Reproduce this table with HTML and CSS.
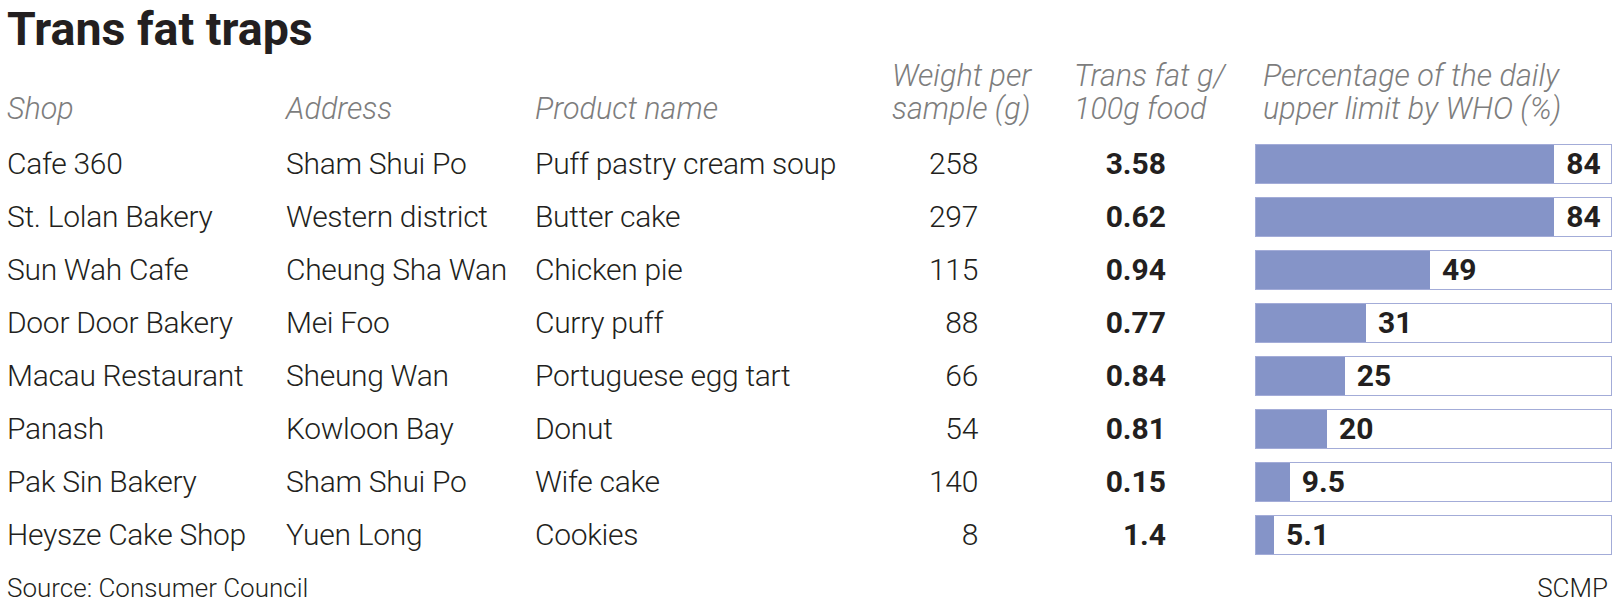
FILE: index.html
```html
<!DOCTYPE html>
<html lang="en">
<head>
<meta charset="utf-8">
<title>Trans fat traps</title>
<link rel="stylesheet" href="styles.css">
</head>
<body>
<div class="page">
  <h1 class="title">Trans fat traps</h1>
  <div class="table">
    <div class="row head">
      <div class="cell">Shop</div>
      <div class="cell">Address</div>
      <div class="cell">Product name</div>
      <div class="cell">Weight per<br>sample (g)</div>
      <div class="cell">Trans fat g/<br>100g food</div>
      <div class="cell pct-head">Percentage of the daily<br>upper limit by WHO (%)</div>
    </div>
    <div class="row">
      <div class="cell">Cafe 360</div>
      <div class="cell">Sham Shui Po</div>
      <div class="cell">Puff pastry cream soup</div>
      <div class="cell num">258</div>
      <div class="cell fat">3.58</div>
      <div class="cell"><div class="bar"><div class="fill" style="width:84%"></div><span class="val">84</span></div></div>
    </div>
    <div class="row">
      <div class="cell">St. Lolan Bakery</div>
      <div class="cell">Western district</div>
      <div class="cell">Butter cake</div>
      <div class="cell num">297</div>
      <div class="cell fat">0.62</div>
      <div class="cell"><div class="bar"><div class="fill" style="width:84%"></div><span class="val">84</span></div></div>
    </div>
    <div class="row">
      <div class="cell">Sun Wah Cafe</div>
      <div class="cell">Cheung Sha Wan</div>
      <div class="cell">Chicken pie</div>
      <div class="cell num">115</div>
      <div class="cell fat">0.94</div>
      <div class="cell"><div class="bar"><div class="fill" style="width:49%"></div><span class="val">49</span></div></div>
    </div>
    <div class="row">
      <div class="cell">Door Door Bakery</div>
      <div class="cell">Mei Foo</div>
      <div class="cell">Curry puff</div>
      <div class="cell num">88</div>
      <div class="cell fat">0.77</div>
      <div class="cell"><div class="bar"><div class="fill" style="width:31%"></div><span class="val">31</span></div></div>
    </div>
    <div class="row">
      <div class="cell">Macau Restaurant</div>
      <div class="cell">Sheung Wan</div>
      <div class="cell">Portuguese egg tart</div>
      <div class="cell num">66</div>
      <div class="cell fat">0.84</div>
      <div class="cell"><div class="bar"><div class="fill" style="width:25%"></div><span class="val">25</span></div></div>
    </div>
    <div class="row">
      <div class="cell">Panash</div>
      <div class="cell">Kowloon Bay</div>
      <div class="cell">Donut</div>
      <div class="cell num">54</div>
      <div class="cell fat">0.81</div>
      <div class="cell"><div class="bar"><div class="fill" style="width:20%"></div><span class="val">20</span></div></div>
    </div>
    <div class="row">
      <div class="cell">Pak Sin Bakery</div>
      <div class="cell">Sham Shui Po</div>
      <div class="cell">Wife cake</div>
      <div class="cell num">140</div>
      <div class="cell fat">0.15</div>
      <div class="cell"><div class="bar"><div class="fill" style="width:9.5%"></div><span class="val">9.5</span></div></div>
    </div>
    <div class="row">
      <div class="cell">Heysze Cake Shop</div>
      <div class="cell">Yuen Long</div>
      <div class="cell">Cookies</div>
      <div class="cell num">8</div>
      <div class="cell fat">1.4</div>
      <div class="cell"><div class="bar"><div class="fill" style="width:5.1%"></div><span class="val">5.1</span></div></div>
    </div>
  </div>
  <div class="footer">
    <span>Source: Consumer Council</span>
    <span>SCMP</span>
  </div>
</div>
</body>
</html>
```
FILE: styles.css
```css
html, body {
  margin: 0;
  padding: 0;
  background: #ffffff;
}

.page {
  width: 1617px;
  box-sizing: border-box;
  padding: 3px 5px 0 7px;
  font-family: Roboto, "Noto Sans", sans-serif;
  color: #231f20;
}

.title {
  margin: 0;
  font-size: 46.5px;
  line-height: 52px;
  font-weight: 700;
  color: #231f20;
}

.table {
  display: flex;
  flex-direction: column;
}

.row {
  display: grid;
  grid-template-columns: 279px 249px 357px 182px 181px 357px;
  align-items: center;
  height: 53px;
  font-size: 30px;
  font-weight: 300;
  letter-spacing: -0.3px;
  line-height: 53px;
  white-space: nowrap;
}

.row.head {
  height: auto;
  align-items: end;
  margin-top: 3.6px;
  margin-bottom: 12.8px;
  font-size: 30.5px;
  line-height: 33px;
  letter-spacing: 0;
  font-style: italic;
  color: #7d7d7d;
}

.pct-head {
  padding-left: 8px;
}

.num {
  text-align: right;
  padding-right: 96px;
}

.fat {
  text-align: right;
  padding-right: 89px;
  font-weight: 700;
  letter-spacing: 0;
}

.bar {
  height: 40px;
  box-sizing: border-box;
  border: 1.5px solid #a3acd8;
  display: flex;
  align-items: center;
  background: #ffffff;
}

.fill {
  height: 100%;
  background: #8594c8;
}

.val {
  margin-left: 12px;
  font-size: 30px;
  line-height: 30px;
  font-weight: 700;
  letter-spacing: 0;
  color: #231f20;
}

.footer {
  display: flex;
  justify-content: space-between;
  margin-top: 12px;
  padding-right: 4px;
  font-size: 26px;
  line-height: 30px;
  font-weight: 300;
  color: #231f20;
}
```
